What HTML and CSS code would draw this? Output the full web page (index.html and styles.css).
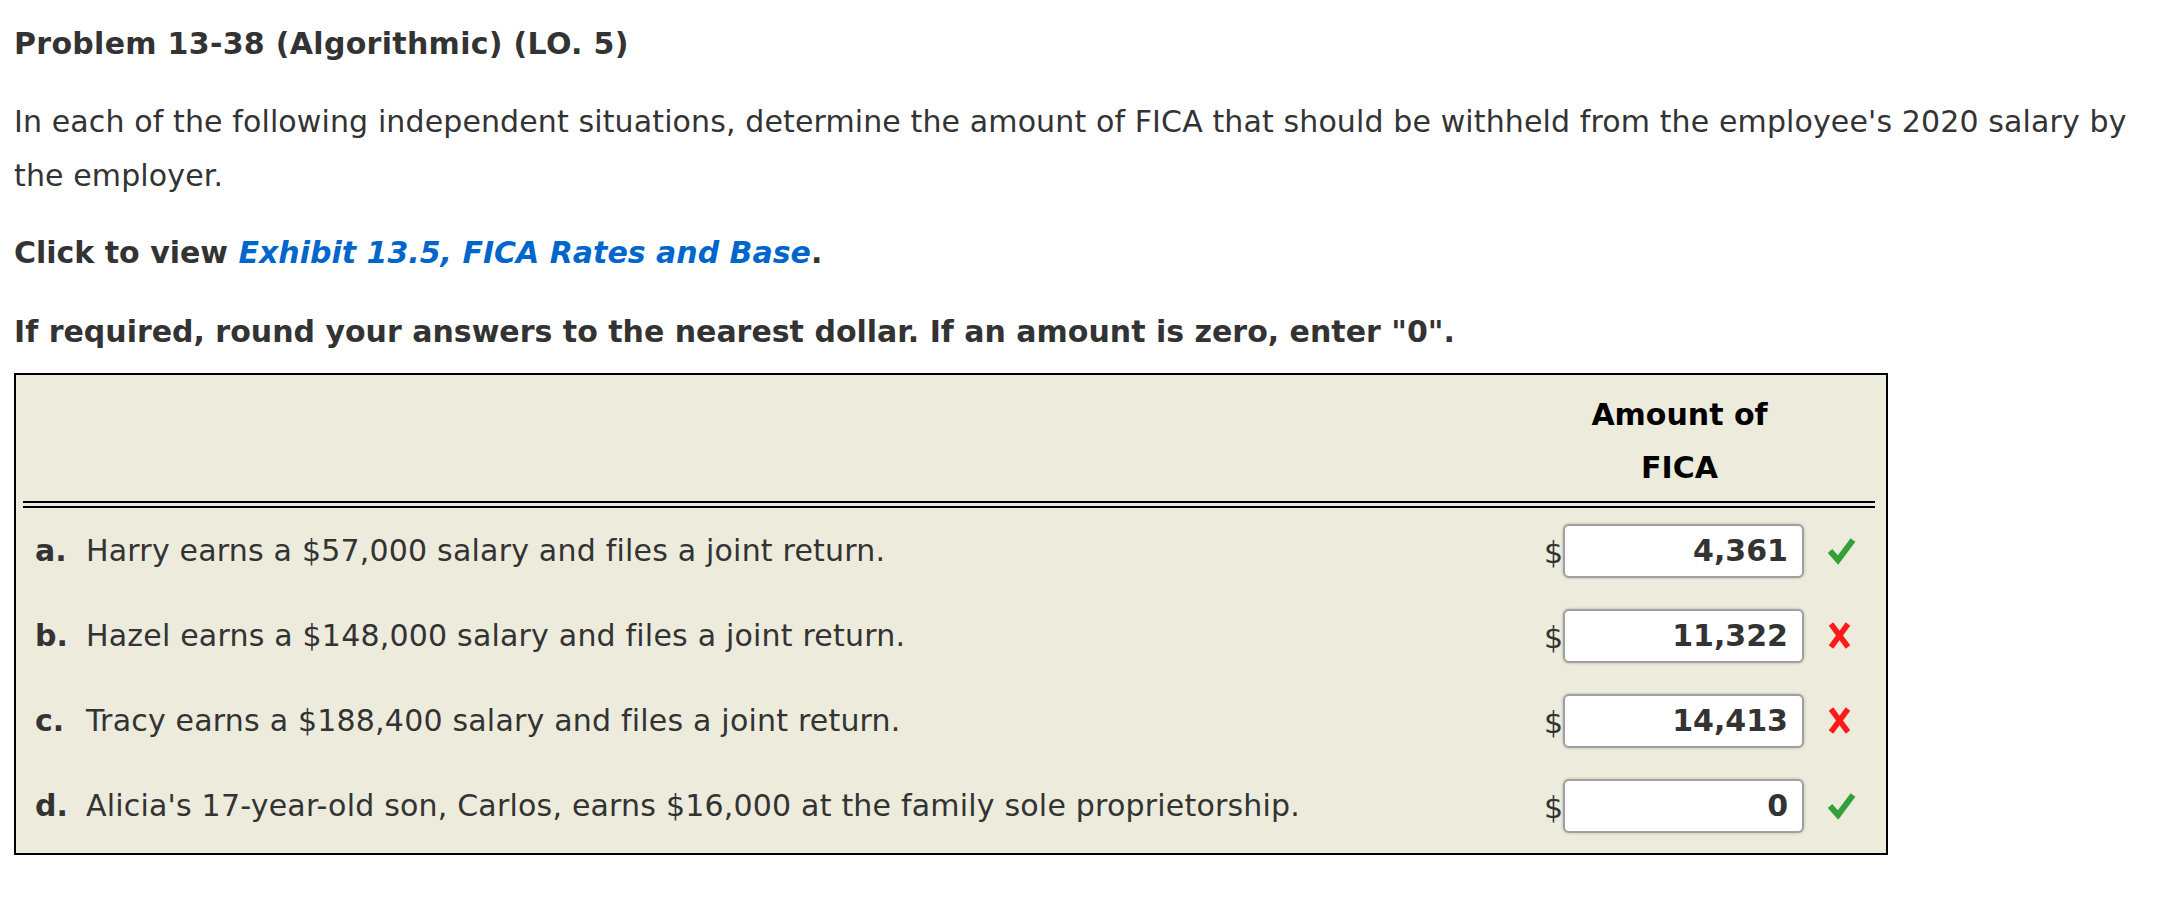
FILE: index.html
```html
<!DOCTYPE html>
<html lang="en">
<head>
<meta charset="utf-8">
<title>Problem 13-38</title>
<link rel="stylesheet" href="styles.css">
</head>
<body>
<div class="page">
  <h1 class="title">Problem 13-38 (Algorithmic) (LO. 5)</h1>
  <p class="intro">In each of the following independent situations, determine the amount of FICA that should be withheld from the employee's 2020 salary by<br>the employer.</p>
  <p class="strong">Click to view <a class="exhibit" href="#">Exhibit 13.5, FICA Rates and Base</a>.</p>
  <p class="strong note">If required, round your answers to the nearest dollar. If an amount is zero, enter "0".</p>

  <div class="qtable">
    <div class="qhead">
      <div class="colhead">Amount of<br>FICA</div>
    </div>
    <div class="dbl"></div>

    <div class="qrow">
      <div class="desc"><b class="lbl">a.</b>Harry earns a $57,000 salary and files a joint return.</div>
      <span class="dollar">$</span>
      <div class="ans">4,361</div>
      <svg class="mark" viewBox="0 0 29 29"><polyline class="ok" points="3,15 11,24 26,4"/></svg>
    </div>

    <div class="qrow">
      <div class="desc"><b class="lbl">b.</b>Hazel earns a $148,000 salary and files a joint return.</div>
      <span class="dollar">$</span>
      <div class="ans">11,322</div>
      <svg class="mark" viewBox="0 0 29 29"><path class="bad" d="M4 3 L21 26 M21 3 L4 26"/></svg>
    </div>

    <div class="qrow">
      <div class="desc"><b class="lbl">c.</b>Tracy earns a $188,400 salary and files a joint return.</div>
      <span class="dollar">$</span>
      <div class="ans">14,413</div>
      <svg class="mark" viewBox="0 0 29 29"><path class="bad" d="M4 3 L21 26 M21 3 L4 26"/></svg>
    </div>

    <div class="qrow">
      <div class="desc"><b class="lbl">d.</b>Alicia's 17-year-old son, Carlos, earns $16,000 at the family sole proprietorship.</div>
      <span class="dollar">$</span>
      <div class="ans">0</div>
      <svg class="mark" viewBox="0 0 29 29"><polyline class="ok" points="3,15 11,24 26,4"/></svg>
    </div>
  </div>
</div>
</body>
</html>
```
FILE: styles.css
```css
html, body {
  margin: 0;
  padding: 0;
  background: #ffffff;
}

body {
  font-family: "DejaVu Sans", Verdana, sans-serif;
  font-size: 30px;
  line-height: 54px;
  color: #333333;
  letter-spacing: 0.12px;
}

.page {
  padding: 17px 14px 0 14px;
}

.title {
  margin: 0 0 24px 0;
  font-size: 30px;
  line-height: 54px;
  font-weight: bold;
  color: #333333;
  letter-spacing: 0.3px;
}

.intro {
  margin: 0 0 23px 0;
}

.strong {
  margin: 0 0 25px 0;
  font-weight: bold;
  letter-spacing: 0;
}

.note {
  margin-bottom: 14px;
}

.exhibit {
  color: #0066cc;
  font-style: italic;
  text-decoration: none;
}

.qtable {
  box-sizing: border-box;
  width: 1874px;
  border: 2px solid #000000;
  background: #ecebdc;
  padding: 0 0 5px 0;
}

.qhead {
  display: grid;
  grid-template-columns: 1fr 20px 241px 52px;
  padding: 13px 30px 7px 19px;
  height: 126px;
  box-sizing: border-box;
}

.colhead {
  grid-column: 2 / 4;
  text-align: center;
  font-weight: bold;
  color: #000000;
  line-height: 53px;
  padding-left: 12px;
  letter-spacing: 0;
}

.dbl {
  height: 3px;
  margin: 0 11px 0 7px;
  border-top: 2px solid #000000;
  border-bottom: 2px solid #000000;
}

.qrow {
  display: grid;
  grid-template-columns: 1fr 20px 241px 52px;
  align-items: center;
  height: 85px;
  padding: 0 30px 0 19px;
}

.desc {
  white-space: nowrap;
  letter-spacing: 0.2px;
}

.lbl {
  display: inline-block;
  width: 51px;
  font-weight: bold;
  letter-spacing: 0;
}

.dollar {
  text-align: right;
  padding-top: 4px;
  letter-spacing: 0;
}

.ans {
  box-sizing: border-box;
  height: 54px;
  border: 2px solid #a0a0a0;
  border-radius: 6px;
  background: #ffffff;
  text-align: right;
  padding-right: 14px;
  font-weight: bold;
  line-height: 50px;
  color: #333333;
  letter-spacing: 0;
  box-shadow: 0 0 3px rgba(0, 0, 0, 0.25);
}

.mark {
  width: 29px;
  height: 29px;
  justify-self: end;
}

.ok {
  fill: none;
  stroke: #34a03a;
  stroke-width: 6;
  stroke-linejoin: miter;
}

.bad {
  fill: none;
  stroke: #ff1a1a;
  stroke-width: 5.5;
}
```
